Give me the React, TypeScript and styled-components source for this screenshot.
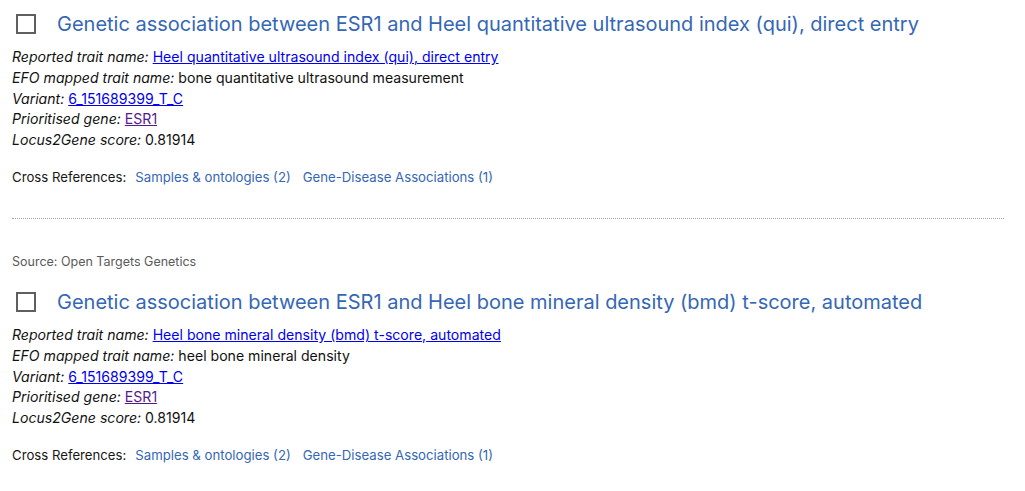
import React from 'react';
import styled, { createGlobalStyle } from 'styled-components';

const GlobalStyle = createGlobalStyle`
    body {
        margin: 0;
        background: #ffffff;
        font-family: Inter, Roboto, 'Liberation Sans', sans-serif;
        color: #171717;
    }
`;

type Entry = {
    title: string;
    reported: string;
    efo: string;
    variant: string;
    gene: string;
    score: string;
    source?: string;
};

const entries: Entry[] = [
    {
        title: 'Genetic association between ESR1 and Heel quantitative ultrasound index (qui), direct entry',
        reported: 'Heel quantitative ultrasound index (qui), direct entry',
        efo: 'bone quantitative ultrasound measurement',
        variant: '6_151689399_T_C',
        gene: 'ESR1',
        score: '0.81914',
    },
    {
        title: 'Genetic association between ESR1 and Heel bone mineral density (bmd) t-score, automated',
        reported: 'Heel bone mineral density (bmd) t-score, automated',
        efo: 'heel bone mineral density',
        variant: '6_151689399_T_C',
        gene: 'ESR1',
        score: '0.81914',
        source: 'Open Targets Genetics',
    },
];

const Card = ({ entry }: { entry: Entry }) => (
    <StyledCard>
        {entry.source && <StyledSource>Source: {entry.source}</StyledSource>}
        <StyledHeader>
            <StyledCheckbox />
            <StyledTitle>{entry.title}</StyledTitle>
        </StyledHeader>
        <StyledDetails>
            <StyledLine>
                <em>Reported trait name:</em> <StyledLink href="#">{entry.reported}</StyledLink>
            </StyledLine>
            <StyledLine>
                <em>EFO mapped trait name:</em> {entry.efo}
            </StyledLine>
            <StyledLine>
                <em>Variant:</em> <StyledLink href="#">{entry.variant}</StyledLink>
            </StyledLine>
            <StyledLine>
                <em>Prioritised gene:</em> <StyledLink href="#" $visited>{entry.gene}</StyledLink>
            </StyledLine>
            <StyledLine>
                <em>Locus2Gene score:</em> {entry.score}
            </StyledLine>
        </StyledDetails>
        <StyledXrefs>
            <StyledXrefLabel>Cross References:</StyledXrefLabel>
            <StyledXrefLink href="#">Samples &amp; ontologies (2)</StyledXrefLink>
            <StyledXrefLink href="#">Gene-Disease Associations (1)</StyledXrefLink>
        </StyledXrefs>
    </StyledCard>
);

export default function App() {
    return (
        <>
            <GlobalStyle />
            <StyledPage>
                <Card entry={entries[0]} />
                <StyledDivider />
                <Card entry={entries[1]} />
            </StyledPage>
        </>
    );
}

const StyledPage = styled.div`
    padding: 12px 21px 0 12px;
`;

const StyledCard = styled.div`
    display: flex;
    flex-direction: column;
`;

const StyledSource = styled.div`
    font-size: 12.5px;
    line-height: 16px;
    color: #5a5a5a;
    margin-bottom: 20px;
`;

const StyledHeader = styled.div`
    display: flex;
    align-items: center;
    gap: 21px;
    padding-left: 4px;
`;

const StyledCheckbox = styled.span`
    width: 20px;
    height: 20px;
    box-sizing: border-box;
    border: 2px solid #5f5f5f;
    flex-shrink: 0;
`;

const StyledTitle = styled.h2`
    margin: 0;
    font-weight: 400;
    font-size: 20px;
    line-height: 24px;
    color: #3567b5;
`;

const StyledDetails = styled.div`
    margin-top: 11px;
`;

const StyledLine = styled.div`
    font-size: 14.1px;
    line-height: 20.8px;
    color: #111;

    em {
        font-style: italic;
    }
`;

const StyledLink = styled.a<{ $visited?: boolean }>`
    color: ${({ $visited }) => ($visited ? '#551a8b' : '#0000ee')};
    text-decoration: underline;
`;

const StyledXrefs = styled.div`
    display: flex;
    gap: 12px;
    margin-top: 18px;
    font-size: 13.2px;
    line-height: 16px;
`;

const StyledXrefLabel = styled.span`
    color: #171717;
    margin-right: -3px;
`;

const StyledXrefLink = styled.a`
    color: #3567b5;
    text-decoration: none;
`;

const StyledDivider = styled.hr`
    margin: 33px 0 35px 0;
    border: none;
    border-top: 1px dotted #a8a8a8;
    height: 0;
`;
